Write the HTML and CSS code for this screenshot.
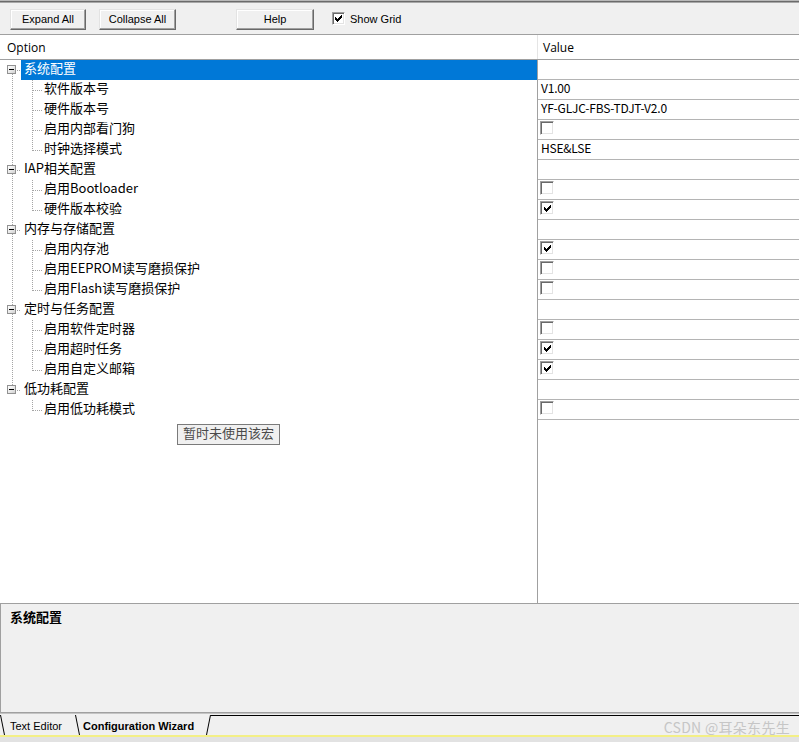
FILE: index.html
```html
<!DOCTYPE html>
<html>
<head>
<meta charset="utf-8">
<link rel="stylesheet" href="styles.css">
</head>
<body>
<div class="app">
  <div class="topline"></div>
  <div class="toolbar">
    <button class="btn b-expand">Expand All</button>
    <button class="btn b-collapse">Collapse All</button>
    <button class="btn b-help">Help</button>
    <span class="cb tb-cb"><svg class="tick" width="7" height="7" viewBox="0 0 7 7"><path d="M6 0h1v1h-1z M5 1h2v1h-2z M0 2h1v1h-1z M4 2h3v1h-3z M0 3h2v1h-2z M3 3h3v1h-3z M0 4h5v1h-5z M1 5h3v1h-3z M2 6h1v1h-1z"/></svg></span>
    <span class="tb-label">Show Grid</span>
  </div>
  <div class="header">
    <div class="hopt">Option</div>
    <div class="hval">Value</div>
  </div>
  <div class="body">
    <div class="optcol">
      <div class="group">
        <div class="grow sel"><span class="gutter"><span class="exp"></span></span><span class="glabel">系统配置</span></div>
        <div class="kids">
          <div class="kid">软件版本号</div>
          <div class="kid">硬件版本号</div>
          <div class="kid">启用内部看门狗</div>
          <div class="kid">时钟选择模式</div>
        </div>
      </div>
      <div class="group">
        <div class="grow"><span class="gutter"><span class="exp"></span></span><span class="glabel">IAP相关配置</span></div>
        <div class="kids">
          <div class="kid">启用Bootloader</div>
          <div class="kid">硬件版本校验</div>
        </div>
      </div>
      <div class="group">
        <div class="grow"><span class="gutter"><span class="exp"></span></span><span class="glabel">内存与存储配置</span></div>
        <div class="kids">
          <div class="kid">启用内存池</div>
          <div class="kid">启用EEPROM读写磨损保护</div>
          <div class="kid">启用Flash读写磨损保护</div>
        </div>
      </div>
      <div class="group">
        <div class="grow"><span class="gutter"><span class="exp"></span></span><span class="glabel">定时与任务配置</span></div>
        <div class="kids">
          <div class="kid">启用软件定时器</div>
          <div class="kid">启用超时任务</div>
          <div class="kid">启用自定义邮箱</div>
        </div>
      </div>
      <div class="group">
        <div class="grow"><span class="gutter"><span class="exp"></span></span><span class="glabel">低功耗配置</span></div>
        <div class="kids">
          <div class="kid">启用低功耗模式</div>
        </div>
      </div>
    </div>
    <div class="valcol">
      <div class="vrow"></div>
      <div class="vrow">V1.00</div>
      <div class="vrow">YF-GLJC-FBS-TDJT-V2.0</div>
      <div class="vrow"><span class="cb"></span></div>
      <div class="vrow">HSE&amp;LSE</div>
      <div class="vrow"></div>
      <div class="vrow"><span class="cb"></span></div>
      <div class="vrow"><span class="cb"><svg class="tick" width="7" height="7" viewBox="0 0 7 7"><path d="M6 0h1v1h-1z M5 1h2v1h-2z M0 2h1v1h-1z M4 2h3v1h-3z M0 3h2v1h-2z M3 3h3v1h-3z M0 4h5v1h-5z M1 5h3v1h-3z M2 6h1v1h-1z"/></svg></span></div>
      <div class="vrow"></div>
      <div class="vrow"><span class="cb"><svg class="tick" width="7" height="7" viewBox="0 0 7 7"><path d="M6 0h1v1h-1z M5 1h2v1h-2z M0 2h1v1h-1z M4 2h3v1h-3z M0 3h2v1h-2z M3 3h3v1h-3z M0 4h5v1h-5z M1 5h3v1h-3z M2 6h1v1h-1z"/></svg></span></div>
      <div class="vrow"><span class="cb"></span></div>
      <div class="vrow"><span class="cb"></span></div>
      <div class="vrow"></div>
      <div class="vrow"><span class="cb"></span></div>
      <div class="vrow"><span class="cb"><svg class="tick" width="7" height="7" viewBox="0 0 7 7"><path d="M6 0h1v1h-1z M5 1h2v1h-2z M0 2h1v1h-1z M4 2h3v1h-3z M0 3h2v1h-2z M3 3h3v1h-3z M0 4h5v1h-5z M1 5h3v1h-3z M2 6h1v1h-1z"/></svg></span></div>
      <div class="vrow"><span class="cb"><svg class="tick" width="7" height="7" viewBox="0 0 7 7"><path d="M6 0h1v1h-1z M5 1h2v1h-2z M0 2h1v1h-1z M4 2h3v1h-3z M0 3h2v1h-2z M3 3h3v1h-3z M0 4h5v1h-5z M1 5h3v1h-3z M2 6h1v1h-1z"/></svg></span></div>
      <div class="vrow"></div>
      <div class="vrow"><span class="cb"></span></div>
    </div>
  </div>
  <div class="desc">系统配置</div>
  <div class="tabs">
    <div class="tabrow">
      <svg class="slant" width="6" height="21" viewBox="0 0 6 21"><line x1="0.5" y1="1" x2="4.5" y2="21"/></svg>
      <span class="tab tab-text">Text Editor</span>
      <svg class="slant" width="7" height="21" viewBox="0 0 7 21"><line x1="1.5" y1="1" x2="5.5" y2="21"/></svg>
      <span class="tab tab-active">Configuration Wizard</span>
      <svg class="slant" width="7" height="21" viewBox="0 0 7 21"><line x1="6.5" y1="1" x2="2.5" y2="21"/></svg>
      <div class="rest"><span class="mark">CSDN @耳朵东先生</span></div>
    </div>
    <div class="yellow"></div>
  </div>
  <div class="tip">暂时未使用该宏</div>
</div>
</body>
</html>
```
FILE: styles.css
```css
* { box-sizing: border-box; }
html, body { margin: 0; padding: 0; }
body {
  width: 799px;
  height: 742px;
  overflow: hidden;
  background: #f0f0f0;
  font-family: "Noto Sans CJK SC", "Liberation Sans", sans-serif;
  color: #000;
}
.app {
  position: relative;
  display: flex;
  flex-direction: column;
  height: 742px;
}
.topline {
  height: 3px;
  flex: none;
  background: linear-gradient(to bottom, #b9b9b9 0 1px, #6b6b6b 1px 2px, #a8a8a8 2px 3px);
}
.toolbar {
  height: 32px;
  flex: none;
  display: flex;
  align-items: flex-start;
  padding-top: 6px;
  border-bottom: 1px solid #a0a0a0;
  background: #f0f0f0;
}
.btn {
  height: 21px;
  padding: 0 0 2px 0;
  margin: 0;
  background: #f0f0f0;
  border: 1px solid;
  border-color: #e3e3e3 #696969 #696969 #e3e3e3;
  box-shadow: inset -1px -1px #a0a0a0, inset 1px 1px #fff;
  font: 11px "Liberation Sans", sans-serif;
  color: #000;
}
.b-expand { margin-left: 10px; width: 76px; }
.b-collapse { margin-left: 13px; width: 77px; }
.b-help { margin-left: 60px; width: 78px; }
.cb {
  width: 14px;
  height: 14px;
  flex: none;
  display: flex;
  align-items: flex-start;
  justify-content: flex-start;
  background: #fff;
  border: 1px solid;
  border-color: #a0a0a0 #fff #fff #a0a0a0;
  box-shadow: inset 1px 1px #696969, inset -1px -1px #e3e3e3;
}
.tick { display: block; margin: 3px 0 0 3px; shape-rendering: crispEdges; }
.tick path { fill: #000; }
.tb-cb { margin: 3px 0 0 18px; width: 13px; height: 13px; }
.tb-cb .tick { margin: 2px 0 0 2px; }
.tb-label {
  margin-left: 5px;
  margin-top: 2px;
  font: 11px/16px "Liberation Sans", sans-serif;
}
.header {
  height: 25px;
  flex: none;
  display: flex;
  background: #fff;
  border-bottom: 1px solid #a0a0a0;
  font: 12px/24px "Open Sans", sans-serif;
}
.hopt { width: 538px; padding: 1px 0 0 7px; border-right: 1px solid #e5e5e5; }
.hval { flex: 1; padding: 1px 0 0 5px; }
.body {
  flex: 1;
  min-height: 0;
  display: flex;
  background: #fff;
}
.optcol { width: 538px; flex: none; border-right: 1px solid #a0a0a0; }
.valcol { flex: 1; }
.group {
  background: repeating-linear-gradient(to bottom, #a5a5a5 0 1px, transparent 1px 2px) 12px 0 / 1px 100% no-repeat;
}
.group:first-child { background-position: 12px 14px; }
.group:last-child { background-size: 1px 5px; }
.grow { height: 20px; display: flex; }
.gutter {
  width: 21px;
  height: 20px;
  flex: none;
  padding: 5px 0 0 7px;
  background: repeating-linear-gradient(to right, #a5a5a5 0 1px, transparent 1px 2px) 17px 10px / 4px 1px no-repeat;
}
.exp {
  width: 9px;
  height: 9px;
  display: flex;
  align-items: center;
  justify-content: center;
  border: 1px solid #919191;
  background: linear-gradient(135deg, #fff 0%, #e6e6e6 60%, #d0d0d0 100%);
}
.exp::after { content: ""; width: 5px; height: 1px; background: #000; }
.glabel { flex: 1; height: 20px; padding-left: 3px; font-size: 13px; line-height: 16px; }
.sel .glabel { background: #0078d7; color: #fff; }
.kids {
  background: repeating-linear-gradient(to bottom, #a5a5a5 0 1px, transparent 1px 2px) 32px 0 / 1px calc(100% - 9px) no-repeat;
}
.kid {
  height: 20px;
  padding-left: 44px;
  font-size: 13px;
  line-height: 16px;
  background: repeating-linear-gradient(to right, #a5a5a5 0 1px, transparent 1px 2px) 33px 10px / 10px 1px no-repeat;
}
.vrow {
  height: 20px;
  display: flex;
  align-items: flex-start;
  padding-left: 3px;
  border-bottom: 1px solid #b4b4b4;
  font-size: 12px;
  letter-spacing: -0.2px;
  line-height: 16px;
}
.vrow .cb { margin: 1px 0 0 -1px; }
.desc {
  height: 110px;
  flex: none;
  padding: 3px 0 0 9px;
  background: #f0f0f0;
  border-top: 1px solid #a0a0a0;
  border-bottom: 1px solid #a0a0a0;
  border-left: 1px solid #a0a0a0;
  font-size: 13px;
  font-weight: bold;
  line-height: 20px;
}
.tabs {
  height: 29px;
  flex: none;
  display: flex;
  flex-direction: column;
  border-top: 1px solid #c4c4c4;
  background: #f0f0f0;
}
.tabrow { height: 21px; display: flex; }
.slant { flex: none; display: block; }
.slant line { stroke: #000; stroke-width: 1; }
.tab { height: 21px; padding-top: 5px; font: 11px/14px "Liberation Sans", sans-serif; flex: none; }
.tab-text { width: 68px; padding-left: 4px; }
.tab-active { width: 123px; padding-left: 2px; font-weight: bold; }
.rest {
  flex: 1;
  margin-top: 1px;
  border-top: 1px solid #000;
  display: flex;
  justify-content: flex-end;
  padding: 3px 9px 0 0;
}
.mark { font-size: 14px; line-height: 17px; color: #c6c6c6; letter-spacing: 0.3px; }
.yellow { height: 2px; background: #f3ef86; }
.tabs::after { content: ""; flex: 1; background: #e2e2e2; }
.tip {
  position: absolute;
  left: 177px;
  top: 424px;
  width: 103px;
  height: 21px;
  border: 1px solid #7a7a7a;
  background: #f0f0f0;
  color: #4a4a4a;
  font-size: 13px;
  line-height: 16px;
  text-align: center;
}
```
